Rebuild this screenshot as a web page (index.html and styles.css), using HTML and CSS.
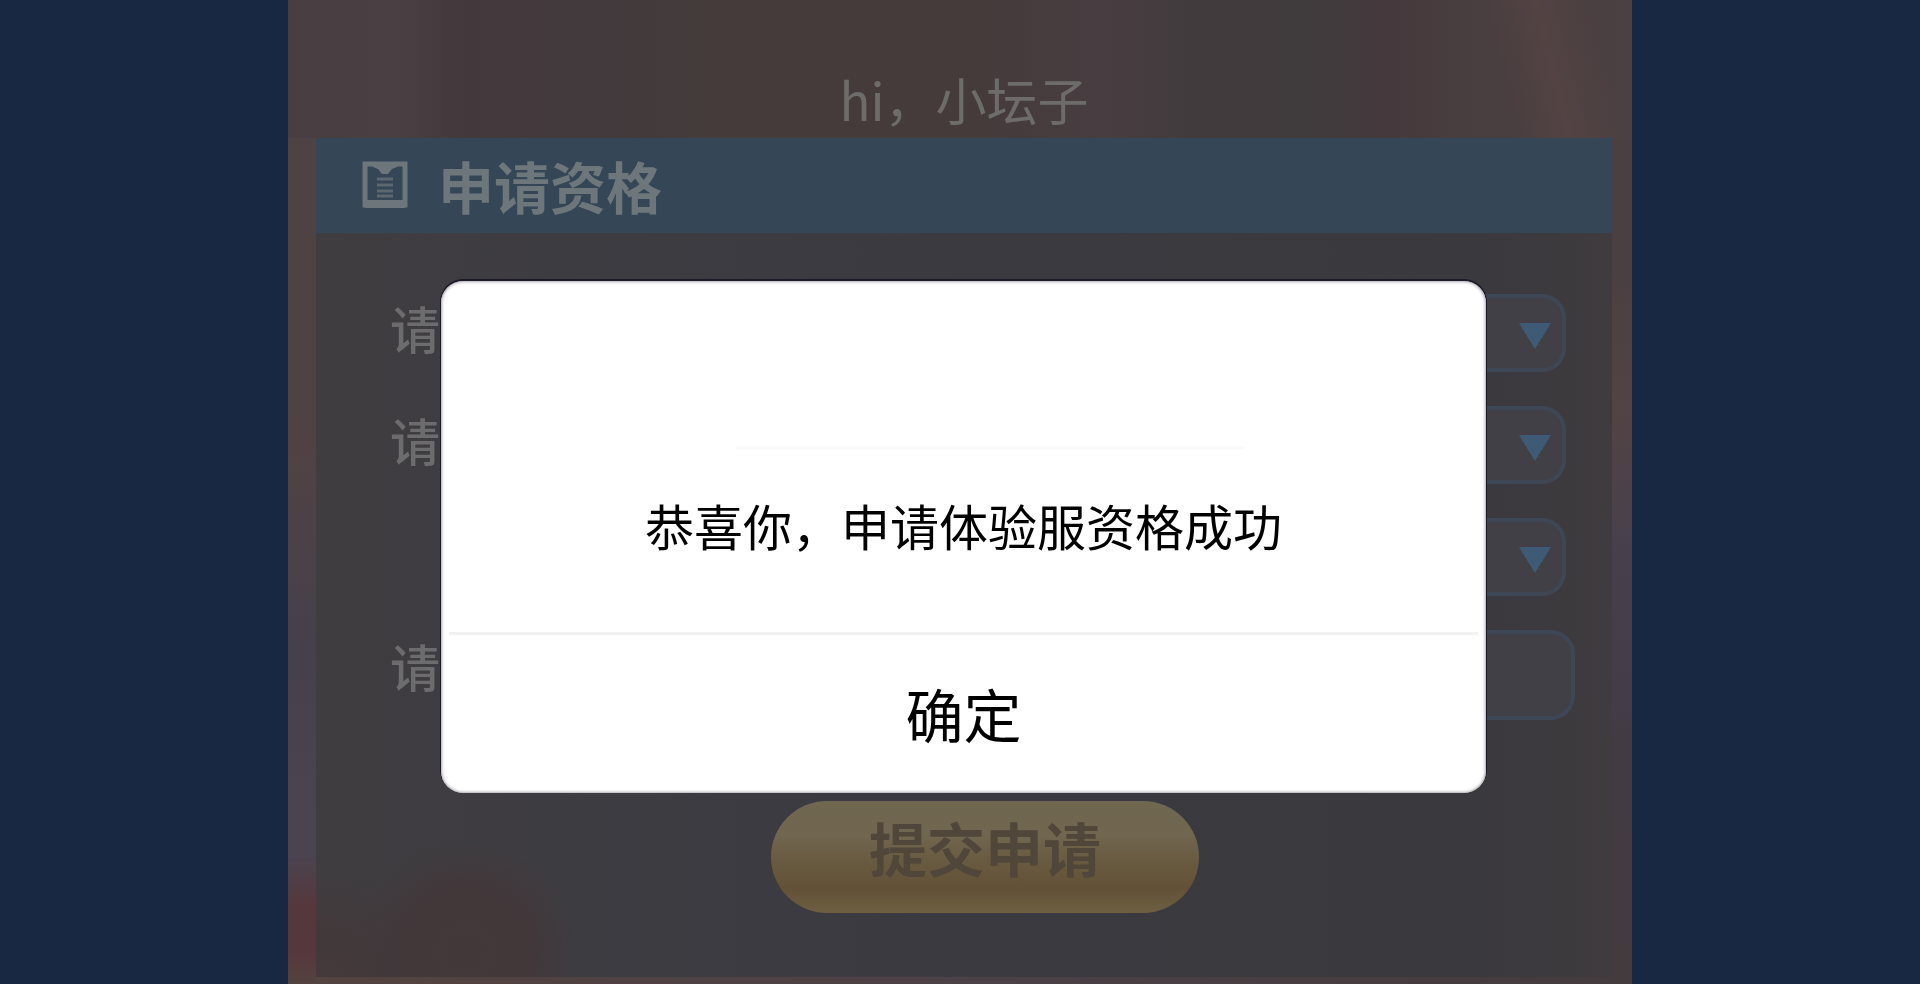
FILE: index.html
```html
<!DOCTYPE html>
<html lang="zh-CN">
  <head>
    <meta charset="UTF-8" />
    <meta name="viewport" content="width=device-width, initial-scale=1.0" />
    <title>申请资格</title>
    <link rel="stylesheet" href="styles.css">
  </head>
  <body>
    <main class="page">
      <p class="greeting">hi，小坛子</p>

      <section class="panel">
        <h2 class="panel-title">
          <svg class="title-icon" viewBox="0 0 46 48" aria-hidden="true">
            <path d="M3 3H43V44H3Z" fill="none" stroke="currentColor" stroke-width="5" />
            <path d="M3 43H43" stroke="currentColor" stroke-width="8" />
            <path d="M11 2H35V6L30 8L26 13H20L16 8L11 6Z" fill="currentColor" />
            <path d="M15 18H31M15 24H31M15 30H31M15 35H31" stroke="currentColor" stroke-width="3" opacity="0.7" />
          </svg>
          申请资格
        </h2>

        <form class="apply-form" name="applyform" action="">
          <div class="row">
            <label id="label1" for="select1">请</label>
            <div class="select-box">
              <select id="select1" name="select1"></select>
            </div>
          </div>
          <div class="row">
            <label id="label2" for="select2">请</label>
            <div class="select-box">
              <select id="select2" name="select2"></select>
            </div>
          </div>
          <div class="row row-sub">
            <div class="select-box">
              <select id="select3" name="select3" aria-labelledby="label2"></select>
            </div>
          </div>
          <div class="row row-input">
            <label for="contact">请</label>
            <input type="text" id="contact" name="contact" />
          </div>
          <button type="submit" class="submit-btn">提交申请</button>
        </form>
      </section>

      <div class="mask">
        <div class="dialog" role="dialog" aria-modal="true" aria-describedby="message">
          <div class="dialog-body">
            <hr class="dialog-line" />
            <p id="message" class="message">恭喜你，申请体验服资格成功</p>
          </div>
          <button type="button" class="ok-btn">确定</button>
        </div>
      </div>
    </main>
  </body>
</html>
```
FILE: styles.css
```css
* {
  box-sizing: border-box;
}
body {
  margin: 0;
  background-color: #182742;
  font-family: "Noto Sans CJK SC", sans-serif;
}
button,
input,
select {
  font-family: inherit;
}
.page {
  position: relative;
  width: 70%;
  min-height: 100vh;
  margin: 0 auto;
  padding: 0 20px 7px 28px;
  /* side strips and the bottom edge of the stage */
  background:
    linear-gradient(#4b4041 0%, #4e4243 14%, #504244 46%, #46404c 66%, #4b4350 82%, #4b4350 87%, #55383c 92%, #55383c 97%, #54433f 100%) left / 28px 100% no-repeat,
    linear-gradient(#4a3f41 0%, #4b4041 28%, #524344 42%, #47404c 56%, #433b44 76%, #443b3e 100%) right / 20px 100% no-repeat,
    linear-gradient(90deg, #54433f, #4c4146 50%, #443b3e);
}
.greeting {
  height: 138px;
  margin: 0 -20px 0 -28px;
  padding: 63px 0 0 8px;
  font-size: 51px;
  line-height: 72px;
  text-align: center;
  color: #6e6c6b;
  background:
    linear-gradient(76deg, transparent 89%, rgba(92, 71, 69, 0.5) 93%, transparent 97%),
    linear-gradient(90deg, #483e41 0%, #4a3f42 8%, #43393c 13%, #443a3e 19%, #423a3c 24%, #453b3b 32%, #463b3b 52%, #483d41 61%, #413b3d 68%, #403b3d 76%, #45393d 82%, #483d3f 87%, #4b4042 100%);
}
.panel {
  color: #6c6b6e;
  background:
    radial-gradient(circle at 150px 815px, #433839 0, #42383b 70px, transparent 112px),
    radial-gradient(circle at 10px 840px, #44393b 0, #42393b 50px, transparent 110px),
    linear-gradient(90deg, #3f3d40 0, #3d3c41 20%, #3b3a40 50%, #3a393d 90%, #3f3b3f 100%);
}
.panel-title {
  display: flex;
  align-items: center;
  gap: 30px;
  height: 95px;
  margin: 0;
  padding: 0 0 2px 46px;
  font-size: 56px;
  line-height: 84px;
  font-weight: 700;
  color: #6d767b;
  background: #354656;
}
.title-icon {
  width: 46px;
  height: 48px;
}
.apply-form {
  display: flex;
  flex-direction: column;
  gap: 34px;
  padding: 61px 46px 64px 74px;
}
.row {
  display: flex;
  align-items: center;
  gap: 40px;
  height: 78px;
}
.row label {
  width: 200px;
  padding-bottom: 12px;
  font-size: 50px;
  line-height: 72px;
  font-weight: 500;
}
.row-sub {
  padding-left: 240px;
}
.row-input {
  height: 90px;
  margin-right: -9px;
}
.row-input label {
  padding-bottom: 20px;
}
.select-box {
  position: relative;
  flex: 1;
}
.select-box::after {
  content: "";
  position: absolute;
  top: 29px;
  right: 15px;
  border-top: 26px solid #3f5a74;
  border-left: 16px solid transparent;
  border-right: 16px solid transparent;
  pointer-events: none;
}
.row select,
.row input {
  display: block;
  width: 100%;
  height: 78px;
  padding: 0 20px;
  font-size: 50px;
  color: inherit;
  background: #414047;
  border: 4px solid #3e4756;
  border-radius: 24px;
  appearance: none;
}
.row input {
  flex: 1;
  height: 90px;
}
.submit-btn {
  align-self: center;
  width: 428px;
  height: 112px;
  margin: 47px 0 0 14px;
  padding: 0 0 20px;
  font-size: 58px;
  line-height: 84px;
  font-weight: 700;
  color: #50463a;
  border: none;
  border-radius: 56px;
  background: linear-gradient(#6f6750 0%, #716650 30%, #685a40 55%, #625137 78%, #6e5f42 100%);
  cursor: pointer;
}
.mask {
  position: absolute;
  top: 0;
  left: 0;
  right: 0;
  padding: 281px 146px 0 153px;
}
.dialog {
  overflow: hidden;
  background: #fff;
  border-radius: 22px;
  box-shadow: 0 -1px 0 1px #1d1a27, inset 0 0 3px 1px #aaa6ae;
}
.dialog-body {
  height: 351px;
  padding-top: 165px;
}
.dialog-line {
  width: 508px;
  height: 3px;
  margin: 0 242px 0 auto;
  border: none;
  background: #fafafa;
}
.message {
  margin: 40px 0 0;
  font-size: 49px;
  line-height: 72px;
  text-align: center;
  color: #000;
}
.ok-btn {
  display: block;
  width: calc(100% - 16px);
  height: 161px;
  margin: 0 8px;
  padding: 0 0 2px;
  font-size: 58px;
  line-height: 84px;
  color: #000;
  background: none;
  border: none;
  border-top: 3px solid #f2f2f2;
  cursor: pointer;
}
```
